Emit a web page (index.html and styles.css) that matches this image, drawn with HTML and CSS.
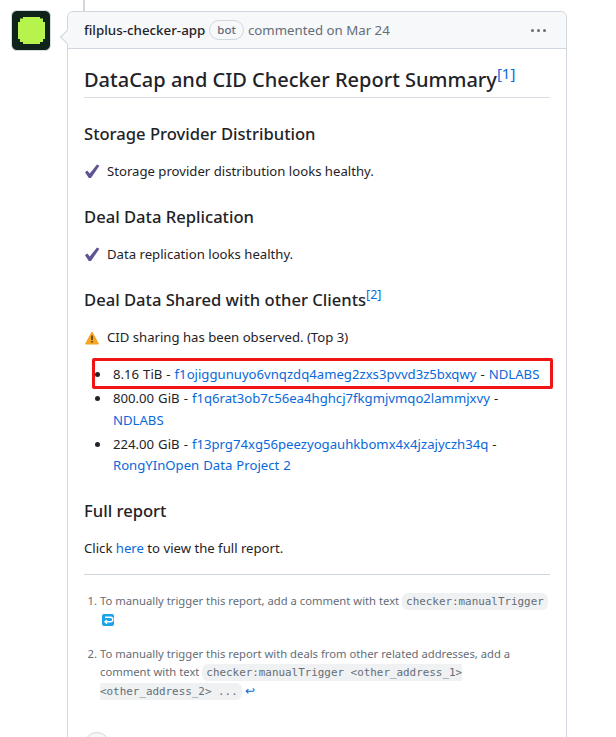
FILE: index.html
```html
<!DOCTYPE html>
<html lang="en">

<head>
  <meta charset="UTF-8">
  <meta name="viewport" content="width=device-width, initial-scale=1.0">
  <title>DataCap and CID Checker Report Summary</title>
  <link rel="stylesheet" href="styles.css">
</head>

<body>
  <div class="thread">
    <div class="timeline-line"></div>
    <div class="avatar">
      <svg width="27" height="27" viewBox="0 0 27 27">
        <path fill="#b6f34d" d="M5 0H22V1.5H25V5H27V22H25V25H22V27H5V25H2V22H0V5H2V1.5H5Z" />
      </svg>
    </div>
    <div class="comment">
      <div class="comment-header">
        <span class="author">filplus-checker-app</span>
        <span class="bot-label">bot</span>
        <span class="comment-date">commented on Mar 24</span>
        <span class="dots"><i></i><i></i><i></i></span>
      </div>
      <div class="comment-body">
        <h1>DataCap and CID Checker Report Summary<sup><a href="#">[1]</a></sup></h1>

        <h2>Storage Provider Distribution</h2>
        <p class="status">
          <svg class="check" width="16" height="16" viewBox="0 0 16 16">
            <path fill="#5f5393" d="M1 9.2 3.2 7.4 5.8 10.4 13 1.6 15.4 2.8 7 15H4.8Z" />
          </svg>
          Storage provider distribution looks healthy.
        </p>

        <h2>Deal Data Replication</h2>
        <p class="status">
          <svg class="check" width="16" height="16" viewBox="0 0 16 16">
            <path fill="#5f5393" d="M1 9.2 3.2 7.4 5.8 10.4 13 1.6 15.4 2.8 7 15H4.8Z" />
          </svg>
          Data replication looks healthy.
        </p>

        <h2>Deal Data Shared with other Clients<sup><a href="#">[2]</a></sup></h2>
        <p class="status status-list">
          <svg class="warn" width="16" height="16" viewBox="0 0 16 16">
            <path fill="#f5a623" d="M8 3 14.5 15H1.5Z" stroke="#f5a623" stroke-linejoin="round" />
            <rect x="7.3" y="6.5" width="1.4" height="4.5" fill="#3a2a10" />
            <rect x="7.3" y="12" width="1.4" height="1.5" fill="#3a2a10" />
          </svg>
          CID sharing has been observed. (Top 3)
        </p>
        <ul class="clients">
          <li>8.16 TiB - <a href="#">f1ojiggunuyo6vnqzdq4ameg2zxs3pvvd3z5bxqwy</a> - <a href="#">NDLABS</a>
            <span class="red-box"></span>
          </li>
          <li>800.00 GiB - <a href="#">f1q6rat3ob7c56ea4hghcj7fkgmjvmqo2lammjxvy</a> - <a href="#">NDLABS</a></li>
          <li>224.00 GiB - <a href="#">f13prg74xg56peezyogauhkbomx4x4jzajyczh34q</a> - <a href="#">RongYInOpen Data Project 2</a></li>
        </ul>

        <h2>Full report</h2>
        <p class="report-link">Click <a href="#">here</a> to view the full report.</p>

        <ol class="footnotes">
          <li>
            To manually trigger this report, add a comment with text <code>checker:manualTrigger</code>
            <span class="return-icon">
              <svg width="12" height="12" viewBox="0 0 12 12">
                <path fill="none" stroke="#fff" stroke-width="1.4" d="M3 3.2H8.5A2 2 0 0 1 8.5 7.8H3M5 5.9 3 7.8 5 9.7" />
              </svg>
            </span>
          </li>
          <li>
            To manually trigger this report with deals from other related addresses, add a comment with text
            <code>checker:manualTrigger &lt;other_address_1&gt; &lt;other_address_2&gt; ...</code>
            <a href="#" class="backref">↩</a>
          </li>
        </ol>

        <div class="reaction"></div>
      </div>
    </div>
  </div>
</body>

</html>
```

FILE: styles.css
```css
body {
  margin: 0;
  background: #fff;
  color: #1f2328;
  font-family: "Noto Sans", "Open Sans", sans-serif;
  font-size: 13.15px;
}

a {
  color: #0969da;
  text-decoration: none;
}

.thread {
  position: relative;
  display: flex;
  align-items: flex-start;
  box-sizing: border-box;
  height: 100vh;
  overflow: hidden;
  padding: 10px 49px 0 11px;
}

.timeline-line {
  position: absolute;
  left: 83px;
  top: 0;
  width: 2px;
  height: 12px;
  background: #d0d7de;
}

.avatar {
  flex: none;
  display: flex;
  align-items: center;
  justify-content: center;
  width: 38px;
  height: 39px;
  margin-right: 16px;
  background: #10231a;
  border: 1px solid #d8dee4;
  border-radius: 6px;
}

.comment {
  position: relative;
  flex: 1;
  margin-top: 1px;
  border: 1px solid #d0d7de;
  border-radius: 6px;
}

.comment::before {
  content: "";
  position: absolute;
  left: -6px;
  top: 20px;
  width: 9px;
  height: 9px;
  background: #f6f8fa;
  border-left: 1px solid #d0d7de;
  border-bottom: 1px solid #d0d7de;
  transform: rotate(45deg);
}

.comment-header {
  display: flex;
  align-items: center;
  height: 36px;
  padding: 0 20px 0 16px;
  background: #f6f8fa;
  border-bottom: 1px solid #d0d7de;
  border-radius: 6px 6px 0 0;
  font-size: 13.35px;
}

.author {
  font-weight: 500;
  color: #1f2328;
}

.bot-label {
  margin-left: 4px;
  padding: 0 7px;
  line-height: 18px;
  font-size: 11.5px;
  font-weight: 500;
  color: #656d76;
  border: 1px solid #d0d7de;
  border-radius: 10px;
}

.comment-date {
  margin-left: 4px;
  font-size: 13.25px;
  color: #656d76;
}

.dots {
  display: flex;
  gap: 3px;
  margin-left: auto;
}

.dots i {
  width: 3px;
  height: 3px;
  background: #656d76;
  border-radius: 50%;
}

.comment-body {
  padding: 17px 16px 60px;
  line-height: 20px;
}

h1 {
  margin: 0 0 25px;
  padding-bottom: 3px;
  font-size: 20px;
  line-height: 28px;
  font-weight: 500;
  border-bottom: 1px solid #d8dee4;
}

h2 {
  margin: 0 0 16px;
  font-size: 16.6px;
  line-height: 22px;
  font-weight: 500;
}

sup {
  font-size: 75%;
  line-height: 0;
  font-weight: 400;
}

p {
  margin: 0 0 25px;
}

.status {
  display: flex;
  align-items: center;
  gap: 7px;
}

.status-list {
  margin-bottom: 17px;
}

.report-link {
  margin-bottom: 16px;
}

.clients {
  margin: 0 0 23.5px;
  padding-left: 29px;
  list-style: none;
  line-height: 21.5px;
  word-spacing: 0.6px;
}

.clients li {
  position: relative;
}

.clients li::before {
  content: "";
  position: absolute;
  left: -18px;
  top: 8px;
  width: 5px;
  height: 5px;
  background: #1f2328;
  border-radius: 50%;
}

.clients li + li {
  margin-top: 2.5px;
}

.red-box {
  position: absolute;
  left: -21px;
  top: -6px;
  width: 455px;
  height: 25px;
  border: 3px solid #f01414;
  border-radius: 2px;
}

.footnotes {
  margin: 0;
  padding: 17px 0 0 16px;
  border-top: 1px solid #d0d7de;
  font-size: 11.25px;
  line-height: 18px;
  color: #656d76;
}

.footnotes li + li {
  margin-top: 16px;
}

code {
  padding: 2px 4px;
  font-family: "DejaVu Sans Mono", "Liberation Mono", monospace;
  font-size: 10.9px;
  background: #eff1f3;
  border-radius: 6px;
}

.return-icon {
  display: inline-flex;
  align-items: center;
  justify-content: center;
  width: 12px;
  height: 12px;
  margin-left: 2px;
  vertical-align: -2px;
  background: #1aa3e8;
  border-radius: 2px;
}

.backref {
  font-size: 12px;
}

.reaction {
  width: 24px;
  height: 24px;
  margin-top: 31px;
  border: 1px solid #d0d7de;
  border-radius: 50%;
  background: #f6f8fa;
}
```
